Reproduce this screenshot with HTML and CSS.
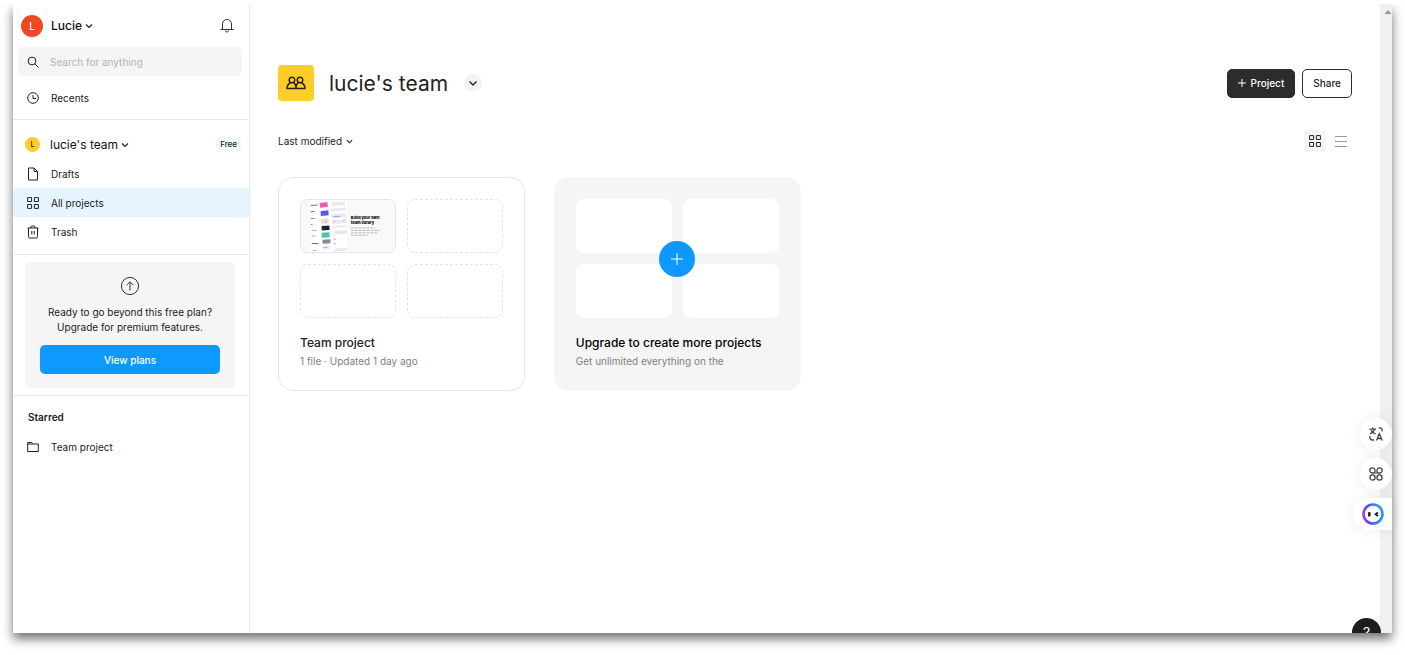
FILE: index.html
```
<!DOCTYPE html>
<html lang="en">

<head>
    <meta charset="utf-8">
    <title>lucie's team</title>
    <link rel="stylesheet" href="styles.css">
</head>

<body>

    <div class="window">
        <aside class="sidebar">
            <div class="side-group">
                <div class="user-row">
                    <button class="user-button">
                        <span class="avatar">L</span>
                        <span class="user-name">Lucie</span>
                        <svg class="chevron" width="8" height="8" viewBox="0 0 8 8"><path d="M1 2.5 4 5.5 7 2.5"/></svg>
                    </button>
                    <button class="bell" aria-label="Notifications">
                        <svg width="14" height="16" viewBox="0 0 14 16"><path d="M.5 11.5h13M2.5 11.5V6a4.5 4.5 0 0 1 9 0v5.5M5 12.5l2 1.8 2-1.8"/></svg>
                    </button>
                </div>
                <label class="search">
                    <svg width="12" height="12" viewBox="0 0 12 12"><circle cx="5" cy="5" r="3.9"/><path d="M7.8 7.8 11.5 11.5"/></svg>
                    <input type="text" placeholder="Search for anything" aria-label="Search for anything">
                </label>
                <a class="nav-item" href="#">
                    <svg width="12" height="12" viewBox="0 0 12 12"><circle cx="6" cy="6" r="5.3"/><path d="M6 3v3.5h3"/></svg>
                    Recents
                </a>
            </div>

            <div class="side-group team-group">
                <div class="team-row">
                    <button class="user-button">
                        <span class="avatar avatar-team">L</span>
                        <span class="user-name team-name">lucie's team</span>
                        <svg class="chevron" width="8" height="8" viewBox="0 0 8 8"><path d="M1 2.5 4 5.5 7 2.5"/></svg>
                    </button>
                    <span class="badge">Free</span>
                </div>
                <a class="nav-item" href="#">
                    <svg width="12" height="14" viewBox="0 0 12 14"><path d="M1.5 1h5.5l3.5 3.5V13h-9zM7 1v3.5h3.5"/></svg>
                    Drafts
                </a>
                <a class="nav-item active" href="#">
                    <svg width="12" height="12" viewBox="0 0 12 12"><path d="M.6.6h4v3.9h-4zM7.4.6h4v3.9h-4zM.6 7.5h4v3.9h-4zM7.4 7.5h4v3.9h-4z"/></svg>
                    All projects
                </a>
                <a class="nav-item" href="#">
                    <svg width="12" height="14" viewBox="0 0 12 14"><path d="M.5 3h11M4 3V1.6Q4 1 4.6 1h2.8q.6 0 .6.6V3M1.5 3v8.5q0 1.5 1.5 1.5h6q1.5 0 1.5-1.5V3M4.8 6v3.5M7.2 6v3.5"/></svg>
                    Trash
                </a>
            </div>

            <div class="side-group promo-group">
                <div class="promo">
                    <svg width="20" height="20" viewBox="0 0 20 20"><circle cx="10" cy="10" r="8.6"/><path d="M10 14.5V6M6.6 9.2 10 5.8l3.4 3.4"/></svg>
                    <p>Ready to go beyond this free plan? Upgrade for premium features.</p>
                    <button class="plans-button">View plans</button>
                </div>
            </div>

            <div class="side-group starred-group">
                <h2>Starred</h2>
                <a class="nav-item" href="#">
                    <svg width="12" height="12" viewBox="0 0 12 12"><path d="M.7 10.5V1.5h4l1 1.5h5.6v7.5zM.7 3h5"/></svg>
                    Team project
                </a>
            </div>
        </aside>

        <main class="content">
            <header class="title-row">
                <span class="team-icon">
                    <svg width="20" height="16" viewBox="0 0 20 16"><path d="M6 2.2a2.8 2.8 0 1 1 0 5.6 2.8 2.8 0 0 1 0-5.6zM14 2.2a2.8 2.8 0 1 1 0 5.6 2.8 2.8 0 0 1 0-5.6zM1 13.5c0-3 1.7-5 3.7-6M7.3 7.5c1.5.8 2.7 3 2.7 6M10 13.5c0-3 1-5.2 2.7-6M15.3 7.5c2 1 3.7 3 3.7 6M.5 13.5h19"/></svg>
                </span>
                <h1>lucie's team</h1>
                <button class="round-button" aria-label="Team menu">
                    <svg width="10" height="10" viewBox="0 0 10 10"><path d="M1.5 3.5 5 7 8.5 3.5"/></svg>
                </button>
                <div class="actions">
                    <button class="button dark">
                        <svg width="8" height="8" viewBox="0 0 8 8"><path d="M4 0v8M0 4h8"/></svg>
                        Project
                    </button>
                    <button class="button">Share</button>
                </div>
            </header>

            <div class="sort-row">
                <button class="sort">
                    Last modified
                    <svg class="chevron" width="7" height="7" viewBox="0 0 8 8"><path d="M1 2.5 4 5.5 7 2.5"/></svg>
                </button>
                <div class="views">
                    <button class="view selected" aria-label="Grid view">
                        <svg width="12" height="12" viewBox="0 0 12 12"><path d="M.6.6h4v3.9h-4zM7.4.6h4v3.9h-4zM.6 7.5h4v3.9h-4zM7.4 7.5h4v3.9h-4z"/></svg>
                    </button>
                    <button class="view" aria-label="List view">
                        <svg width="12" height="11" viewBox="0 0 12 11"><path d="M0 .5h12M0 5.5h12M0 10.5h12"/></svg>
                    </button>
                </div>
            </div>

            <div class="cards">
                <article class="card">
                    <div class="tiles">
                        <div class="tile thumb">
                            <svg viewBox="0 0 96 54" preserveAspectRatio="xMidYMid slice">
                                <rect width="96" height="54" fill="#f9f9f9"/>
                                <path d="M10 0h37v54H10z" fill="#fff"/>
                                <g fill="#444" opacity=".75">
                                    <path d="M10 5.5l7-.5v1l-7 .5zM10 12l4-.3v1l-4 .3zM10 19l4-.3v1l-4 .3z"/>
                                    <path d="M10 25h2v.8h-2zM11 31h5v.6h-5zM11 37h4v.6h-4zM11 44.5h7v.8h-7zM12 51.5h4v.6h-4z"/>
                                </g>
                                <path d="M19 3.5l8-1 .5 5-8 .8z" fill="#ef5cab"/>
                                <path d="M20 12l8-1 .3 5-8 .8z" fill="#5957f5"/>
                                <path d="M20 20l8-.8.3 5-8 .8z" fill="#f4ded8"/>
                                <path d="M21 27l8-.6.3 4.6-8 .6z" fill="#222040"/>
                                <path d="M21 34l8-.6.3 5-8 .6z" fill="#46c5ab"/>
                                <path d="M22 41l8-.5.2 4.2-8 .5z" fill="#858792"/>
                                <path d="M22 47.5l8-.4.2 4-8 .5z" fill="#eceef2"/>
                                <g fill="#e6e9f2">
                                    <path d="M31 3l14-1v3.5l-14 1zM31 9l15-1v3l-15 1zM31 15l15-1v4l-15 1zM32 21l14-1v4l-14 1z"/>
                                    <path d="M32 27l14-1v2l-14 1zM33 32l14-1v4l-14 1zM34 50l13-.8v3l-13 .8z"/>
                                </g>
                                <path d="M33 17h7v.8h-7zM24 22.5h2v.8h-2zM33 40h3v.7h-3zM33 45h3v.7h-3zM23 48.5h4v.8h-4z" fill="#777" opacity=".7"/>
                                <path d="M33 22h2v.8h-2zM42 21.5h3v.6h-3z" fill="#eaa0ad"/>
                                <text class="thumb-title" x="51" y="20">Build your own</text>
                                <text class="thumb-title" x="51" y="25">team library</text>
                                <path class="thumb-lines" d="M51 29h25M51 31.5h30M51 34h27M51 36.5h17"/>
                            </svg>
                        </div>
                        <div class="tile"></div>
                        <div class="tile"></div>
                        <div class="tile"></div>
                    </div>
                    <h3>Team project</h3>
                    <p>1 file · Updated 1 day ago</p>
                </article>

                <article class="card upgrade">
                    <div class="tiles">
                        <div class="tile"></div>
                        <div class="tile"></div>
                        <div class="tile"></div>
                        <div class="tile"></div>
                        <button class="add" aria-label="Create project">
                            <svg width="12" height="12" viewBox="0 0 12 12"><path d="M6 0v12M0 6h12"/></svg>
                        </button>
                    </div>
                    <h3>Upgrade to create more projects</h3>
                    <p>Get unlimited everything on the</p>
                </article>
            </div>
        </main>

        <div class="scrollbar">
            <svg width="8" height="4" viewBox="0 0 8 4"><path d="M4 0 7.5 4h-7z"/></svg>
        </div>

        <!-- floating tools over the right edge -->
        <div class="floating">
            <button class="float-button" aria-label="Translate">
                <svg width="14" height="14" viewBox="0 0 14 14"><path d="M.5 2.2h6.5M3.7.5v1.7M1.2 6.8c2.2-1 3.8-2.5 4.3-4.6M2 3.3c.8 1.7 2.3 2.8 4.5 3.5M9.5.9h1.5q2 0 2 2V4.5M.9 9v1.500q0 2.500 2.500 2.500H5M7.500 13.500l2.800-6.800 2.800 6.800M8.500 11.500h3.600"/></svg>
            </button>
            <button class="float-button" aria-label="Apps">
                <svg width="14" height="14" viewBox="0 0 14 14"><path d="M6 6H3.5A2.6 2.6 0 1 1 6 3.5zM8 6V3.5A2.6 2.6 0 1 1 10.5 6z"/><circle cx="3.5" cy="10.5" r="2.6"/><circle cx="10.5" cy="10.5" r="2.6"/></svg>
            </button>
            <button class="float-button assistant" aria-label="Assistant">
                <svg width="22" height="22" viewBox="0 0 22 22">
                    <defs>
                        <linearGradient id="ring" x1="0" y1=".9" x2=".8" y2=".8">
                            <stop offset="0" stop-color="#a93cf0"/>
                            <stop offset=".4" stop-color="#4f4bf5"/>
                            <stop offset="1" stop-color="#2996f5"/>
                        </linearGradient>
                    </defs>
                    <circle cx="11" cy="11" r="9.5" fill="#fff" stroke="url(#ring)" stroke-width="2.6"/>
                    <path d="M7.3 9.2v4.2" stroke="#111" stroke-width="2.4"/>
                    <path d="M16 9.5 13.5 11.3 16 13" stroke="#111" stroke-width="1.6"/>
                </svg>
            </button>
        </div>
        <button class="help" aria-label="Help">?</button>
    </div>

</body>

</html>
```
FILE: styles.css
```
* {
    box-sizing: border-box;
}

body {
    font-family: Inter, "Liberation Sans", sans-serif;
    font-size: 10px;
    color: #222222;
    background-color: #ffffff;
    height: 100vh;
    margin: 0;
    padding: 4px 13px 22px;
}

h1, h2, h3, p {
    margin: 0;
}

button {
    font: inherit;
    color: inherit;
    background: none;
    border: none;
    padding: 0;
}

svg {
    fill: none;
    stroke: currentColor;
    flex-shrink: 0;
}

.chevron {
    stroke-width: 1.2;
}

.window {
    position: relative;
    display: flex;
    height: 100%;
    background-color: #ffffff;
    box-shadow: 0 6px 10px rgba(0, 0, 0, 0.55);
    clip-path: inset(0 -13px -22px);
}

/* sidebar */

.sidebar {
    width: 237px;
    flex-shrink: 0;
    border-right: 1px solid #e9e9e9;
}

.side-group {
    padding: 7px 0;
    border-bottom: 1px solid #e6e6e6;
}

.user-row, .team-row {
    display: flex;
    align-items: center;
    justify-content: space-between;
    height: 29px;
    padding: 0 15px 0 8px;
}

.user-button {
    display: flex;
    align-items: center;
}

.avatar {
    width: 22px;
    height: 22px;
    line-height: 22px;
    border-radius: 50%;
    background-color: #f24822;
    color: #ffffff;
    font-size: 10px;
    font-weight: 500;
    text-align: center;
}

.user-name {
    margin: 0 3px 0 8px;
    font-size: 12px;
    font-weight: 500;
    color: #111111;
}

.bell {
    display: flex;
    color: #333333;
}

.search {
    display: flex;
    align-items: center;
    gap: 11px;
    height: 29px;
    margin: 7px 7px 7px 5px;
    padding: 0 9px;
    border-radius: 5px;
    background-color: #f5f5f5;
}

.search input {
    flex-grow: 1;
    min-width: 0;
    padding: 0;
    border: none;
    background: none;
    font: inherit;
}

.search input::placeholder {
    color: #b3b3b3;
}

.nav-item {
    display: flex;
    align-items: center;
    gap: 12px;
    height: 29px;
    padding: 0 14px;
    color: #222222;
    text-decoration: none;
}

.nav-item.active {
    background-color: #e5f4ff;
}

.team-group {
    padding: 10px 0 8px;
}

.team-row {
    padding: 0 8px 0 12px;
}

.avatar-team {
    width: 15px;
    height: 15px;
    line-height: 15px;
    background-color: #ffcd29;
    color: #222222;
    font-size: 7px;
}

.team-name {
    margin-left: 10px;
    font-weight: 400;
}

.badge {
    padding: 0 4px;
    border-radius: 2px;
    background-color: #f2f9ff;
    font-size: 8px;
    font-weight: 500;
    line-height: 15px;
}

.promo {
    display: flex;
    flex-direction: column;
    align-items: center;
    margin: 0 14px 0 12px;
    padding: 14px 15px;
    border-radius: 5px;
    background-color: #f5f5f5;
    color: #333333;
}

.promo p {
    margin: 9px 0 10px;
    color: #222222;
    line-height: 15px;
    text-align: center;
}

.plans-button {
    width: 100%;
    height: 29px;
    border-radius: 5px;
    background-color: #0d99ff;
    color: #ffffff;
    font-weight: 500;
}

.starred-group {
    border-bottom: none;
}

.starred-group h2 {
    padding-left: 15px;
    font-size: 10px;
    font-weight: 600;
    line-height: 29px;
}

/* main area */

.content {
    flex-grow: 1;
    min-width: 0;
    padding: 61px 28px 0;
}

.title-row {
    display: flex;
    align-items: center;
}

.team-icon {
    display: flex;
    align-items: center;
    justify-content: center;
    width: 36px;
    height: 36px;
    border-radius: 4px;
    background-color: #ffcd29;
}

.team-icon svg {
    stroke-width: 1.5;
}

h1 {
    margin: 0 16px 0 15px;
    font-size: 21px;
    font-weight: 400;
}

.round-button {
    display: flex;
    align-items: center;
    justify-content: center;
    width: 18px;
    height: 18px;
    border-radius: 50%;
    background-color: #f3f3f3;
}

.round-button svg {
    stroke-width: 1.4;
}

.actions {
    display: flex;
    gap: 7px;
    margin-left: auto;
}

.button {
    display: flex;
    align-items: center;
    gap: 5px;
    height: 29px;
    padding: 0 10px;
    border: 1px solid #2c2c2c;
    border-radius: 5px;
    font-weight: 500;
}

.button.dark {
    background-color: #2c2c2c;
    color: #ffffff;
}

.sort-row {
    display: flex;
    align-items: center;
    justify-content: space-between;
    margin-top: 29px;
}

.sort {
    display: flex;
    align-items: center;
    gap: 4px;
}

.views {
    display: flex;
    gap: 4px;
}

.view {
    display: flex;
    align-items: center;
    justify-content: center;
    width: 22px;
    height: 22px;
    border-radius: 3px;
    color: #999999;
}

.view.selected {
    background-color: #f5f5f5;
    color: #222222;
}

.cards {
    display: grid;
    grid-template-columns: repeat(auto-fill, minmax(220px, 1fr));
    gap: 29px;
    margin-top: 25px;
}

.card {
    padding: 21px 21px 19px;
    border: 1px solid #e6e6e6;
    border-radius: 15px;
}

.tiles {
    position: relative;
    display: grid;
    grid-template-columns: 1fr 1fr;
    gap: 11px;
}

.tile {
    height: 54px;
    border: 1px dashed #e3e3e3;
    border-radius: 8px;
}

.thumb {
    overflow: hidden;
    border-style: solid;
}

.thumb svg {
    display: block;
    width: 100%;
    height: 100%;
    stroke: none;
}

.thumb-title {
    fill: #000000;
    font-size: 4px;
    font-weight: 800;
}

.thumb .thumb-lines {
    stroke: #b5b5b5;
    stroke-width: 1;
    stroke-dasharray: 3 1;
}

.card h3 {
    margin-top: 17px;
    font-size: 12px;
    font-weight: 500;
    line-height: 16px;
}

.card p {
    color: #808080;
    line-height: 20px;
}

.upgrade {
    border-color: #f5f5f5;
    background-color: #f5f5f5;
}

.upgrade h3 {
    color: #000000;
}

.upgrade .tile {
    border: none;
    background-color: #ffffff;
}

.add {
    position: absolute;
    top: 50%;
    left: 50%;
    display: flex;
    align-items: center;
    justify-content: center;
    width: 36px;
    height: 36px;
    margin: -18px 0 0 -18px;
    border-radius: 50%;
    background-color: #0d99ff;
    color: #ffffff;
}

.scrollbar {
    width: 12px;
    flex-shrink: 0;
    padding: 6px 0 0 4px;
    background-color: #f0f0f0;
}

.scrollbar svg {
    display: block;
    fill: #999999;
    stroke: none;
}

/* things that float over the page */

.floating {
    position: absolute;
    top: 414px;
    right: 0;
    display: flex;
    flex-direction: column;
    align-items: flex-end;
    gap: 8px;
}

.float-button {
    display: flex;
    align-items: center;
    justify-content: center;
    width: 32px;
    height: 32px;
    border-radius: 50%;
    background-color: #ffffff;
    color: #444444;
    box-shadow: 0 0 14px rgba(0, 0, 0, 0.08);
}

.float-button svg {
    stroke-width: 1.3;
}

.assistant {
    width: 39px;
    border-radius: 16px 0 0 16px;
}

.help {
    position: absolute;
    right: 11px;
    bottom: -14px;
    width: 29px;
    height: 29px;
    border-radius: 50%;
    background-color: #1e1e1e;
    color: #ffffff;
    font-size: 14px;
    clip-path: inset(0 0 14px);
}
```
